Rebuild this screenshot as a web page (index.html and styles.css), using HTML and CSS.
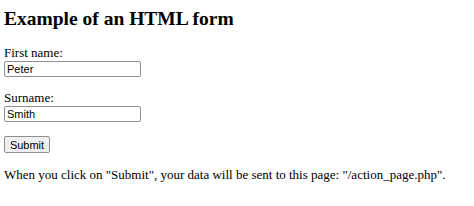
FILE: index.html
```html
<!DOCTYPE html>
<html lang="en">
<head>
  <meta charset="UTF-8" />
  <title>HTML Forms</title>
  <link rel="stylesheet" href="styles.css">
</head>
<body>

  <h2>Example of an HTML form</h2>

  <form action="/action_page.php">
    <label for="fname">First name:</label><br>
    <input type="text" id="fname" name="fname" value="Peter"><br><br>
    <label for="lname">Surname:</label><br>
    <input type="text" id="lname" name="lname" value="Smith"><br><br>
    <input type="submit" value="Submit">
  </form>

  <p>When you click on "Submit", your data will be sent to this page: "/action_page.php".</p>

</body>
</html>
```

FILE: styles.css
```css
body {
  font-family: "Liberation Serif", serif;
  font-size: 13px;
  margin: 0 4px;
  color: #000;
  background: #fff;
}

h2 {
  font-size: 19.5px;
  margin: 8px 0 16px;
}

form {
  line-height: 14.5px;
}

form input[type="text"] {
  font-family: "Liberation Sans", sans-serif;
  font-size: 11px;
  width: 137px;
  height: 16px;
  box-sizing: border-box;
  padding: 0 2px;
  margin: 0;
  border: 1px solid #8f8f8f;
  border-radius: 2px;
  color: #000;
  vertical-align: bottom;
}

form input[type="submit"] {
  font-family: "Liberation Sans", sans-serif;
  font-size: 11px;
  height: 17px;
  width: 46px;
  box-sizing: border-box;
  padding: 0 4px;
  margin: 0;
  border: 1px solid #8f8f8f;
  border-radius: 2px;
  background: #efefef;
  color: #000;
  vertical-align: bottom;
}

p {
  margin: 14px 0;
}
```
